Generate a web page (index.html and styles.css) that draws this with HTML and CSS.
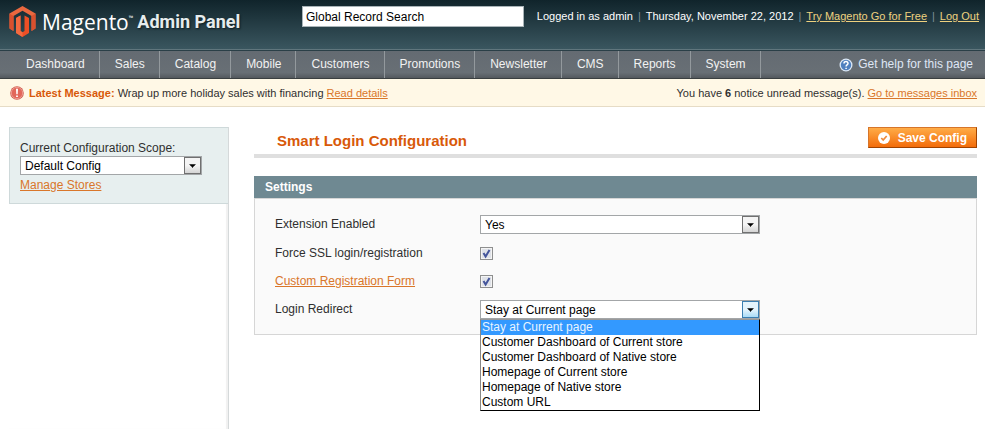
FILE: index.html
```html
<!DOCTYPE html>
<html lang="en">
<head>
<meta charset="utf-8">
<title>Configuration / System / Magento Admin</title>
<link rel="stylesheet" href="styles.css">
</head>
<body>
<header class="header">
  <a class="logo" href="#" aria-label="Magento Admin Panel">
    <svg class="logo-mark" viewBox="0 0 27 31" aria-hidden="true">
      <path d="M13.500 0 26.500 7.500V22.500L22.500 25V10L13.500 4.800 4.500 10V25L.5 22.500V7.500Z" fill="#e9683f"/>
      <path d="M.5 7.500 4.500 10V25L.5 22.500ZM22.500 10l4-2.500v15L22.500 25Z" fill="#d9502e"/>
      <path d="M7 12 11.500 9.500V25l2 1.300 2-1.300V9.500L20 12v15l-6.500 4L7 27Z" fill="#ee4f25"/>
      <path d="M11.500 9.500V25l2 1.300V31L7 27V12Z" fill="#f36a40"/>
    </svg>
    <span class="logo-name">Magento<sup class="tm">™</sup></span>
    <span class="logo-panel">Admin Panel</span>
  </a>
  <input class="search" type="text" value="Global Record Search" aria-label="Global Record Search">
  <div class="account">
    <span>Logged in as admin</span><span class="bar">|</span><span>Thursday, November 22, 2012</span><span class="bar">|</span><a href="#">Try Magento Go for Free</a><span class="bar">|</span><a href="#">Log Out</a>
  </div>
</header>
<nav class="nav">
  <a class="tab" href="#">Dashboard</a>
  <a class="tab" href="#">Sales</a>
  <a class="tab" href="#">Catalog</a>
  <a class="tab" href="#">Mobile</a>
  <a class="tab" href="#">Customers</a>
  <a class="tab" href="#">Promotions</a>
  <a class="tab" href="#">Newsletter</a>
  <a class="tab" href="#">CMS</a>
  <a class="tab" href="#">Reports</a>
  <a class="tab" href="#">System</a>
  <a class="help" href="#">
    <svg class="help-icon" viewBox="0 0 14 14" aria-hidden="true">
      <circle cx="7" cy="7" r="6.500" fill="#dce8f6"/>
      <circle cx="7" cy="7" r="5.200" fill="#4f80bf"/>
      <path d="M5 5.600C5 2.900 9.200 3 9 5.500 8.900 6.900 7.100 6.800 7.100 8.400M7.100 9.700v1.400" fill="none" stroke="#fff" stroke-width="1.500"/>
    </svg>
    Get help for this page</a>
</nav>
<div class="notice">
  <svg class="alert-icon" viewBox="0 0 14 14" aria-hidden="true">
    <circle cx="7" cy="7" r="6.800" fill="#cf5a4c"/>
    <circle cx="7" cy="7" r="5.700" fill="#e2675a" stroke="#f3aaa0" stroke-width=".8"/>
    <path d="M6 2.800h2L7.700 8.300H6.300ZM6.100 9.400h1.800v1.700H6.100Z" fill="#fff"/>
  </svg>
  <p class="latest"><strong>Latest Message:</strong> Wrap up more holiday sales with financing <a href="#">Read details</a></p>
  <p class="inbox">You have <b>6</b> notice unread message(s). <a href="#">Go to messages inbox</a></p>
</div>
<div class="page">
  <aside class="side">
    <div class="scope">
      <label for="scope">Current Configuration Scope:</label>
      <div class="picker">
        <select id="scope"><option>Default Config</option></select>
        <svg class="arrow" viewBox="0 0 17 17" aria-hidden="true"><path d="M5 7h7v1h-1v1h-1v1H9v1H8v-1H7V9H6V8H5Z"/></svg>
      </div>
      <a href="#">Manage Stores</a>
    </div>
  </aside>
  <main class="main">
    <div class="title-row">
      <h1>Smart Login Configuration</h1>
      <button class="save" type="button">
        <svg class="save-icon" viewBox="0 0 12 12" aria-hidden="true"><circle cx="6" cy="6" r="6" fill="#fff"/><path d="M3.300 6 5.200 8 8.700 4" fill="none" stroke="#ee8a3c" stroke-width="1.700"/></svg>
        Save Config</button>
    </div>
    <section class="panel">
      <h2>Settings</h2>
      <div class="fields">
        <label for="enabled">Extension Enabled</label>
        <div class="picker">
          <select id="enabled"><option>Yes</option><option>No</option></select>
          <svg class="arrow" viewBox="0 0 17 17" aria-hidden="true"><path d="M5 7h7v1h-1v1h-1v1H9v1H8v-1H7V9H6V8H5Z"/></svg>
        </div>
        <label for="ssl">Force SSL login/registration</label>
        <span class="check"><input id="ssl" type="checkbox" checked><svg viewBox="0 0 13 13" aria-hidden="true"><path d="M3.500 6 5.600 9.500 9.500 3" fill="none" stroke="#44559b" stroke-width="2"/></svg></span>
        <a id="form-label" href="#">Custom Registration Form</a>
        <span class="check"><input aria-labelledby="form-label" type="checkbox" checked><svg viewBox="0 0 13 13" aria-hidden="true"><path d="M3.500 6 5.600 9.500 9.500 3" fill="none" stroke="#44559b" stroke-width="2"/></svg></span>
        <label for="redirect">Login Redirect</label>
        <div class="picker open">
          <select id="redirect"><option>Stay at Current page</option></select>
          <svg class="arrow" viewBox="0 0 17 17" aria-hidden="true"><path d="M5 7h7v1h-1v1h-1v1H9v1H8v-1H7V9H6V8H5Z"/></svg>
          <ul class="menu" role="listbox" aria-label="Login Redirect">
            <li role="option" aria-selected="true">Stay at Current page</li>
            <li role="option">Customer Dashboard of Current store</li>
            <li role="option">Customer Dashboard of Native store</li>
            <li role="option">Homepage of Current store</li>
            <li role="option">Homepage of Native store</li>
            <li role="option">Custom URL</li>
          </ul>
        </div>
      </div>
    </section>
  </main>
</div>
</body>
</html>
```
FILE: styles.css
```css
* { box-sizing: border-box; }
body {
  margin: 0;
  background: #fff;
  color: #2f2f2f;
  font: 12px/16px "Liberation Sans", Arial, sans-serif;
}
a { color: #d9762a; }
p, h1, h2, ul { margin: 0; padding: 0; }

.header {
  display: flex;
  align-items: flex-start;
  height: 50px;
  padding: 6px 6px 0 9px;
  background: linear-gradient(#10242b, #3a565f);
  border-bottom: 1px solid #60767d;
  color: #fff;
}
.logo {
  display: flex;
  width: 293px;
  color: #fff;
  text-decoration: none;
  line-height: 32px;
  white-space: nowrap;
}
.logo-mark { width: 27px; height: 31px; margin-right: 6px; }
.logo-name { font-family: "Open Sans", sans-serif; font-size: 21px; }
.tm { font-size: 6px; line-height: 0; vertical-align: 10px; }
.logo-panel {
  margin-left: 4px;
  font-family: Roboto, "Liberation Sans", sans-serif;
  font-size: 18px;
  font-weight: bold;
  color: #e6eced;
  text-shadow: 1px 1px 2px #0b1a20;
}
.search {
  width: 222px;
  height: 21px;
  padding: 0 3px;
  border: 1px solid #a9b4b8;
  background: #fff;
  color: #000;
  font: 12px "Liberation Sans", Arial, sans-serif;
}
.account {
  display: flex;
  gap: 5px;
  margin-left: auto;
  padding-top: 2px;
  font-size: 11px;
  white-space: nowrap;
}
.account a { color: #eed17f; }
.bar { color: #7f9298; }

.nav {
  display: flex;
  height: 29px;
  padding-left: 11px;
  background: linear-gradient(#646b72, #686f75 80%, #54595e);
  border-top: 1px solid #2a3f47;
  border-bottom: 1px solid #3a3f40;
  line-height: 27px;
  font-size: 12px;
}
.tab, .help { color: #f2f2f2; text-decoration: none; white-space: nowrap; }
.tab { padding: 0 14px 0 15px; border-right: 1px solid #93999d; }
.help { display: flex; align-items: center; gap: 5px; margin-left: auto; padding-right: 12px; color: #dfe6f5; }
.help-icon { width: 14px; height: 14px; }

.notice {
  display: flex;
  align-items: center;
  height: 28px;
  padding: 0 8px 0 10px;
  background: #fff8e6;
  border-bottom: 1px solid #e6dcc6;
  font-size: 11px;
  white-space: nowrap;
}
.notice strong { color: #d85909; }
.alert-icon { width: 14px; height: 14px; margin-right: 5px; }
.inbox { margin-left: auto; }

.page { display: flex; gap: 25px; padding: 20px 8px 0 9px; }
.side {
  flex: 0 0 220px;
  min-height: calc(100vh - 127px);
  border-right: 1px solid #d5d9da;
  box-shadow: inset -2px 0 1px #f1f1f1;
}
.scope {
  display: flex;
  flex-direction: column;
  align-items: flex-start;
  height: 77px;
  padding: 12px 10px;
  background: #e7efef;
  border: 1px solid #ced9da;
  border-right: 0;
}
.scope .picker { width: 182px; margin-bottom: 2px; }

.picker { position: relative; height: 19px; }
.picker select {
  display: block;
  width: 100%;
  height: 19px;
  padding: 0 20px 0 4px;
  border: 1px solid #a3a6a8;
  border-radius: 0;
  appearance: none;
  background: #fff;
  color: #000;
  font: 12px/16px "Liberation Sans", Arial, sans-serif;
}
.arrow {
  position: absolute;
  top: 1px;
  right: 1px;
  width: 17px;
  height: 17px;
  border: 1px solid #707070;
  background: linear-gradient(#f4f4f4 50%, #d4d4d4);
  pointer-events: none;
}
.open .arrow { border-color: #3c7fb1; background: linear-gradient(#e5f4fc 50%, #aadcf7); }

.main { flex: 1; min-width: 0; }
.title-row {
  display: flex;
  justify-content: space-between;
  align-items: flex-start;
  height: 31px;
  padding-left: 23px;
  border-bottom: 4px solid #dfdfdf;
}
h1 { padding-top: 5px; color: #d85909; font-size: 15px; line-height: 18px; }
.save {
  display: flex;
  align-items: center;
  gap: 8px;
  height: 21px;
  padding: 0 9px;
  border: 1px solid #b35a1b;
  border-color: #d6752a #a04300 #a04300 #d6752a;
  background: linear-gradient(#ffac47, #f36c0a);
  color: #fff;
  font: bold 12px "Liberation Sans", Arial, sans-serif;
}
.save-icon { width: 12px; height: 12px; }
.panel { margin-top: 18px; }
h2 {
  height: 22px;
  padding-left: 11px;
  background: #6f8992;
  color: #fff;
  font-size: 12px;
  line-height: 23px;
}
.fields {
  display: grid;
  grid-template-columns: 205px 280px;
  grid-template-rows: 29px 28px 28px 28px;
  height: 137px;
  padding: 16px 20px 0;
  background: #fafafa;
  border: 1px solid #d6d6d6;
}
.fields > label, .fields > a { padding-top: 1px; }
.check { display: grid; width: 13px; height: 13px; margin-top: 3px; }
.check > * { grid-area: 1 / 1; width: 13px; height: 13px; margin: 0; }
.check input { appearance: none; border: 1px solid #8e8f8f; background: #dfe2e8; box-shadow: inset 0 0 0 1px #f4f4f4; }
.check svg { pointer-events: none; }

.menu {
  position: absolute;
  top: 19px;
  left: 0;
  right: 0;
  z-index: 1;
  border: 1px solid #000;
  border-top-color: #999;
  border-left-color: #888;
  background: #fff;
  color: #000;
  line-height: 15px;
  list-style: none;
}
.menu li { padding-left: 1px; }
.menu [aria-selected="true"] { background: #3399ff; color: #e8f4ff; }
```
